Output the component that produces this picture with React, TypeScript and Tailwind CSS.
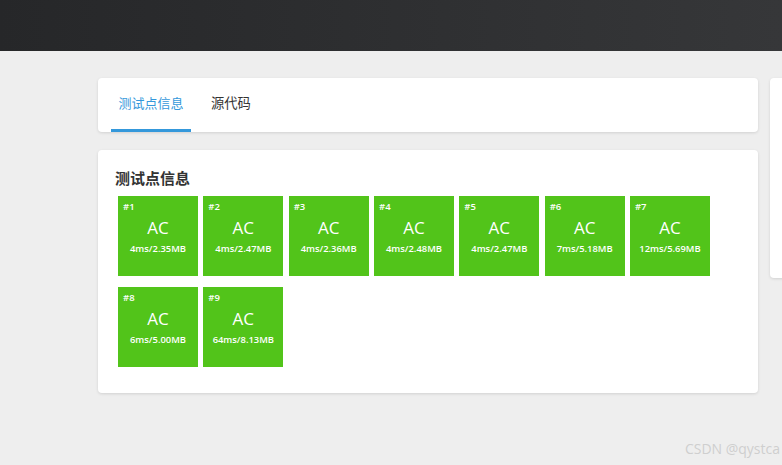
const cases = [
  { id: 1, info: "4ms/2.35MB" },
  { id: 2, info: "4ms/2.47MB" },
  { id: 3, info: "4ms/2.36MB" },
  { id: 4, info: "4ms/2.48MB" },
  { id: 5, info: "4ms/2.47MB" },
  { id: 6, info: "7ms/5.18MB" },
  { id: 7, info: "12ms/5.69MB" },
  { id: 8, info: "6ms/5.00MB" },
  { id: 9, info: "64ms/8.13MB" },
];

function CaseBox({ id, info }: { id: number; info: string }) {
  return (
    <div className="relative flex h-[80px] w-[80px] flex-col items-center bg-[#52c41a] text-white">
      <span className="absolute left-[5px] top-[6px] text-[9.5px] font-semibold leading-none">
        #{id}
      </span>
      <span className="mt-[21px] text-[17px] leading-[22px]">AC</span>
      <span className="mt-[4px] text-[9.4px] font-semibold leading-[12px]">{info}</span>
    </div>
  );
}

export default function App() {
  return (
    <div
      className="relative min-h-[465px] w-full overflow-hidden bg-[#eeeeee]"
      style={{ fontFamily: '"Open Sans", "Noto Sans CJK SC", sans-serif' }}
    >
      <div className="h-[51px] bg-gradient-to-r from-[#262729] to-[#363739]" />

      <div className="flex gap-[12px] pl-[98px] pt-[27px]">
        <div className="flex w-[660px] shrink-0 flex-col gap-[18px]">
          <div className="flex h-[54px] items-stretch gap-[13px] rounded-[4px] bg-white px-[13px] shadow-[0_1px_3px_rgba(0,0,0,0.12)]">
            <div className="flex w-[80px] items-center justify-center border-b-[3px] border-[#3498db] text-[13px] text-[#3498db]">
              测试点信息
            </div>
            <div className="flex items-center border-b-[3px] border-transparent px-[7px] text-[13.3px] text-[#333]">
              源代码
            </div>
          </div>

          <div className="h-[243px] rounded-[4px] bg-white px-[20px] pt-[18px] shadow-[0_1px_3px_rgba(0,0,0,0.12)]">
            <h3 className="-ml-[3px] text-[15px] font-bold leading-[20px] text-[#333]">
              测试点信息
            </h3>
            <div className="mt-[8px] flex w-[610px] flex-wrap gap-x-[5.33px] gap-y-[11px]">
              {cases.map((c) => (
                <CaseBox key={c.id} id={c.id} info={c.info} />
              ))}
            </div>
          </div>
        </div>

        <div className="h-[200px] w-[40px] shrink-0 rounded-[4px] bg-white shadow-[0_1px_3px_rgba(0,0,0,0.12)]" />
      </div>

      <div className="absolute bottom-[6px] right-[2px] text-[14px] font-normal text-[#cfcfcf]">
        CSDN @qystca
      </div>
    </div>
  );
}
